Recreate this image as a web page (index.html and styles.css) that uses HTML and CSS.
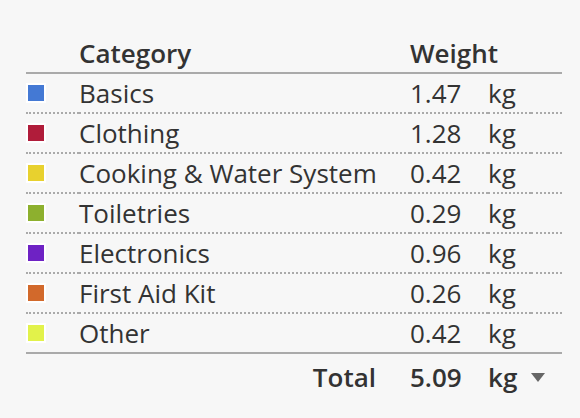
FILE: index.html
```html
<!DOCTYPE html>
<html>
<head>
<meta charset="utf-8">
<link rel="stylesheet" href="styles.css">
</head>
<body>
<table class="summary">
  <colgroup>
    <col class="c-swatch"><col class="c-name"><col class="c-weight"><col class="c-unit"><col class="c-action">
  </colgroup>
  <thead>
    <tr class="head">
      <th></th><th class="name">Category</th><th class="weight" colspan="2">Weight</th><th></th>
    </tr>
  </thead>
  <tbody>
    <tr class="row"><td><span class="swatch" style="background:#4479d4"></span></td><td>Basics</td><td class="num">1.47</td><td>kg</td><td></td></tr>
    <tr class="row"><td><span class="swatch" style="background:#b01c3a"></span></td><td>Clothing</td><td class="num">1.28</td><td>kg</td><td></td></tr>
    <tr class="row"><td><span class="swatch" style="background:#e8d12e"></span></td><td>Cooking &amp; Water System</td><td class="num">0.42</td><td>kg</td><td></td></tr>
    <tr class="row"><td><span class="swatch" style="background:#8db02e"></span></td><td>Toiletries</td><td class="num">0.29</td><td>kg</td><td></td></tr>
    <tr class="row"><td><span class="swatch" style="background:#6e22c4"></span></td><td>Electronics</td><td class="num">0.96</td><td>kg</td><td></td></tr>
    <tr class="row"><td><span class="swatch" style="background:#d2692b"></span></td><td>First Aid Kit</td><td class="num">0.26</td><td>kg</td><td></td></tr>
    <tr class="row last"><td><span class="swatch" style="background:#e2f24a"></span></td><td>Other</td><td class="num">0.42</td><td>kg</td><td></td></tr>
  </tbody>
  <tfoot>
    <tr class="total">
      <td></td><td class="total-label">Total</td><td class="num">5.09</td><td>kg</td><td><span class="caret"></span></td>
    </tr>
  </tfoot>
</table>
</body>
</html>
```

FILE: styles.css
```css
html, body {
  margin: 0;
  background: #f7f7f7;
}
body {
  padding: 34px 18px 0 26px;
  font-family: "Open Sans", "DejaVu Sans", sans-serif;
  font-size: 26px;
  color: #333;
}
.summary {
  border-collapse: collapse;
  width: 536px;
  table-layout: fixed;
}
.c-swatch { width: 53px; }
.c-name { width: 331px; }
.c-weight { width: 78px; }
.c-unit { width: 43px; }
.c-action { width: 31px; }
th, td {
  padding: 0;
  text-align: left;
  white-space: nowrap;
  vertical-align: middle;
  line-height: 30px;
}
.head th {
  height: 34px;
  padding-top: 4px;
  font-weight: 600;
  border-bottom: 2px solid #aaa;
  vertical-align: top;
}
.row td {
  height: 38px;
  border-bottom: 2px dotted #aaa;
}
.row.last td {
  border-bottom: 2px solid #aaa;
}
.swatch {
  display: block;
  width: 16px;
  height: 16px;
  border: 2px solid #fff;
}
.total td {
  height: 46px;
  font-weight: 600;
}
.total-label {
  text-align: right !important;
  padding-right: 34px !important;
}
.caret {
  display: block;
  width: 0;
  height: 0;
  border-left: 7px solid transparent;
  border-right: 7px solid transparent;
  border-top: 9px solid #666;
}
```
